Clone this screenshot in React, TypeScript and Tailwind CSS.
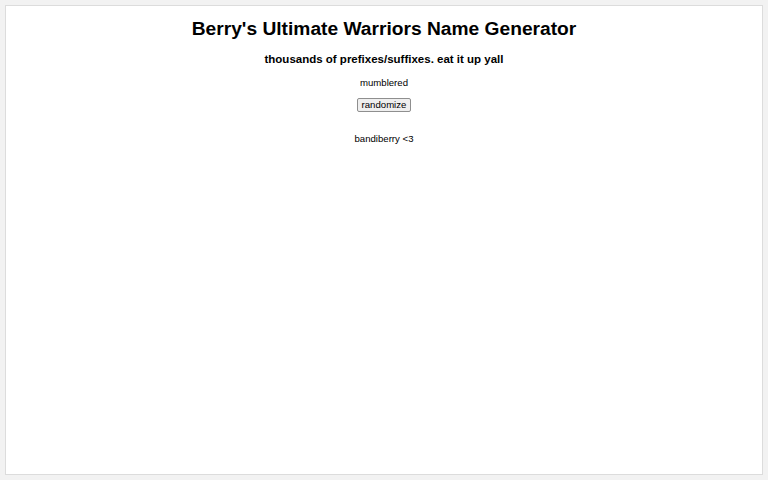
import React from 'react';

const App: React.FC = () => (
    <div className="min-h-screen bg-[#f2f2f2] p-[5px] font-['Liberation_Sans',Arial,sans-serif] text-black">
        <div className="h-[470px] bg-white border border-[#dcdcdc] flex flex-col items-center pt-[11px]">
            <h1 className="text-[19.2px] font-bold leading-[23px]">Berry's Ultimate Warriors Name Generator</h1>
            <h3 className="mt-[12px] text-[11.5px] font-bold leading-[14px]">thousands of prefixes/suffixes. eat it up yall</h3>
            <p className="mt-[11px] text-[9.6px] leading-[12px]">mumblered</p>
            <button className="mt-[9px] px-[4px] text-[9.6px] leading-[12px] bg-[#efefef] border border-[#8f8f8f] rounded-[2px]">randomize</button>
            <p className="mt-[21px] text-[9.6px] leading-[12px]">bandiberry &lt;3</p>
        </div>
    </div>
);

export default App;
